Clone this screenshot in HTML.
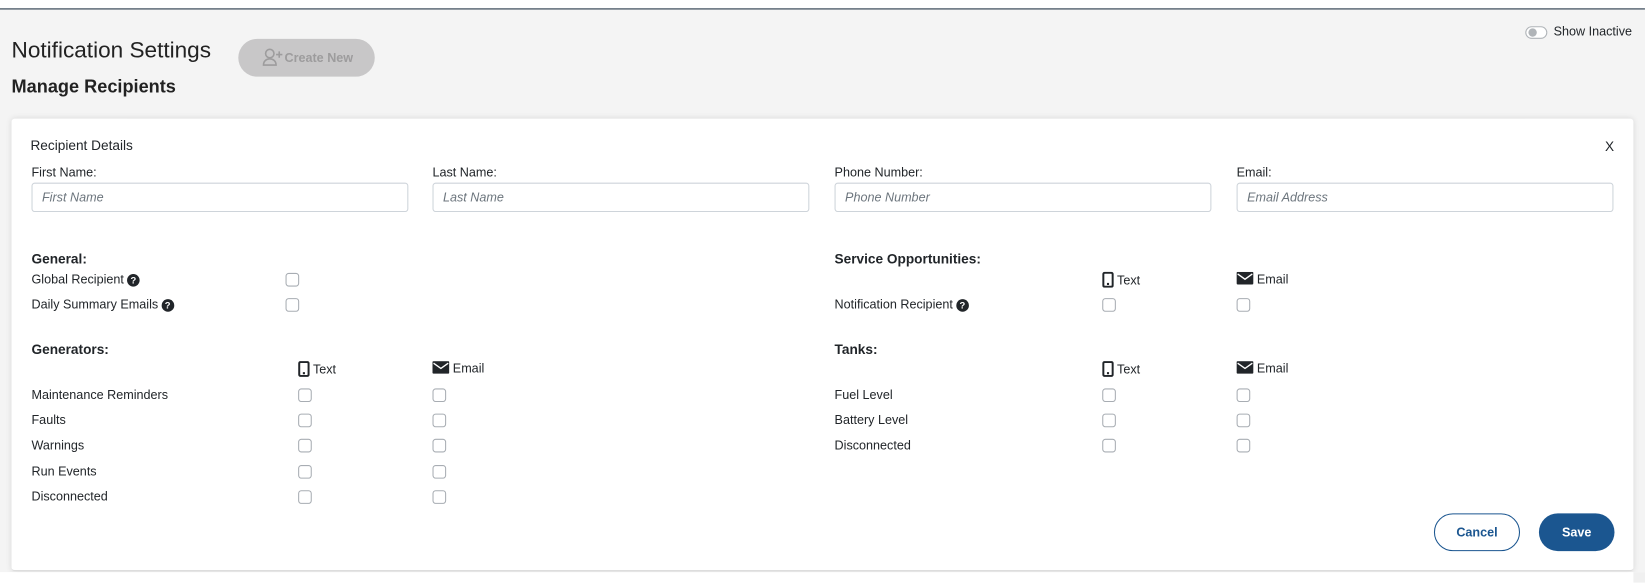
<!DOCTYPE html>
<html><head><style>
*{margin:0;padding:0;box-sizing:border-box}
body{width:1646px;height:576px;background:#fff;font-family:"Liberation Sans",sans-serif;color:#212529;position:relative;overflow:hidden;font-size:12px}
.wrap{position:absolute;left:0;top:0;width:1568px;height:549px;transform:scale(1.04974);transform-origin:0 0}
.a{position:absolute;white-space:nowrap}
.bg{position:absolute;left:0;top:8px;width:1567px;height:541px;background:#f4f4f4;border-top:1px solid #1c2e40}
.card{position:absolute;left:11px;top:113px;width:1545px;height:431px;background:#fff;border-radius:3px;box-shadow:0 0 6px rgba(0,0,0,.12);border-bottom:1px solid #ddd}
.inp{position:absolute;top:174px;height:28px;width:359px;border:1px solid #ced4da;border-radius:3px;font-style:italic;color:#6c757d;font-size:12px;padding:6px 9px}
.cb{position:absolute;width:13px;height:13px;border:1px solid #a8adb3;border-radius:3px;background:#fff}
.h{font-weight:bold;font-size:13px}
.q{display:inline-block;width:12px;height:12px;border-radius:50%;background:#212529;color:#fff;font-size:9px;font-weight:bold;text-align:center;line-height:12px;vertical-align:0;margin-left:3px}
.lab{font-size:12px;line-height:14px}
</style></head><body><div class="wrap">
<div class="bg"></div>
<div class="a" style="left:11px;top:36px;font-size:21.5px;color:#222">Notification Settings</div>
<div class="a" style="left:227px;top:37px;width:130px;height:36px;border-radius:18px;background:#c8c7c8;color:#9d9c9d;font-weight:bold;font-size:12px;line-height:36px;text-align:left;padding-left:22px">
<svg width="22" height="18" viewBox="0 0 22 18" style="vertical-align:-4px"><circle cx="8" cy="6" r="4" fill="none" stroke="#9d9c9d" stroke-width="1.5"/><path d="M2 17c0-4 3-6 6-6s6 2 6 6z" fill="none" stroke="#9d9c9d" stroke-width="1.5"/><path d="M14 7h6M17 4v6" stroke="#9d9c9d" stroke-width="1.5"/></svg>Create New</div>
<div class="a" style="left:11px;top:72px;font-size:17.3px;font-weight:bold;color:#222">Manage Recipients</div>
<div class="a" style="left:1453px;top:25px;width:21px;height:12px;border:1px solid #b0b4b8;border-radius:6px;background:#fff"><div style="position:absolute;left:2px;top:1px;width:8px;height:8px;border-radius:50%;background:#b0b4b8"></div></div>
<div class="a" style="left:1480px;top:23px;font-size:12px">Show Inactive</div>
<div class="card"></div>
<div class="a" style="left:29px;top:131px;font-size:13px">Recipient Details</div>
<div class="a" style="left:1529px;top:132px;font-size:13px">X</div>
<div class="a lab" style="left:30px;top:157px">First Name:</div>
<div class="a lab" style="left:412px;top:157px">Last Name:</div>
<div class="a lab" style="left:795px;top:157px">Phone Number:</div>
<div class="a lab" style="left:1178px;top:157px">Email:</div>
<div class="inp" style="left:30px">First Name</div>
<div class="inp" style="left:412px">Last Name</div>
<div class="inp" style="left:795px">Phone Number</div>
<div class="inp" style="left:1178px">Email Address</div>

<div class="a h" style="left:30px;top:239px">General:</div>
<div class="a lab" style="left:30px;top:259px">Global Recipient<span class="q">?</span></div>
<div class="cb" style="left:272px;top:260px"></div>
<div class="a lab" style="left:30px;top:283px">Daily Summary Emails<span class="q">?</span></div>
<div class="cb" style="left:272px;top:284px"></div>

<div class="a h" style="left:30px;top:325px">Generators:</div>
<div class="a lab" style="left:284px;top:344px"><svg width="11" height="15" viewBox="0 0 11 15" style="vertical-align:-3px"><rect x="1" y="0.8" width="9" height="13.4" rx="1.5" fill="none" stroke="#212529" stroke-width="2"/><rect x="4.5" y="10.5" width="2" height="2" fill="#212529"/></svg> Text</div>
<div class="a lab" style="left:412px;top:344px"><svg width="16" height="12" viewBox="0 0 16 12" style="vertical-align:-1px"><rect x="0" y="0" width="16" height="12" rx="1" fill="#212529"/><path d="M1 2l7 5 7-5" fill="none" stroke="#fff" stroke-width="1.3"/></svg> Email</div>
<div class="a lab" style="left:30px;top:369px">Maintenance Reminders</div>
<div class="a lab" style="left:30px;top:393px">Faults</div>
<div class="a lab" style="left:30px;top:417px">Warnings</div>
<div class="a lab" style="left:30px;top:442px">Run Events</div>
<div class="a lab" style="left:30px;top:466px">Disconnected</div>
<div class="cb" style="left:284px;top:370px"></div><div class="cb" style="left:412px;top:370px"></div>
<div class="cb" style="left:284px;top:394px"></div><div class="cb" style="left:412px;top:394px"></div>
<div class="cb" style="left:284px;top:418px"></div><div class="cb" style="left:412px;top:418px"></div>
<div class="cb" style="left:284px;top:443px"></div><div class="cb" style="left:412px;top:443px"></div>
<div class="cb" style="left:284px;top:467px"></div><div class="cb" style="left:412px;top:467px"></div>

<div class="a h" style="left:795px;top:239px">Service Opportunities:</div>
<div class="a lab" style="left:1050px;top:259px"><svg width="11" height="15" viewBox="0 0 11 15" style="vertical-align:-3px"><rect x="1" y="0.8" width="9" height="13.4" rx="1.5" fill="none" stroke="#212529" stroke-width="2"/><rect x="4.5" y="10.5" width="2" height="2" fill="#212529"/></svg> Text</div>
<div class="a lab" style="left:1178px;top:259px"><svg width="16" height="12" viewBox="0 0 16 12" style="vertical-align:-1px"><rect x="0" y="0" width="16" height="12" rx="1" fill="#212529"/><path d="M1 2l7 5 7-5" fill="none" stroke="#fff" stroke-width="1.3"/></svg> Email</div>
<div class="a lab" style="left:795px;top:283px">Notification Recipient<span class="q">?</span></div>
<div class="cb" style="left:1050px;top:284px"></div><div class="cb" style="left:1178px;top:284px"></div>

<div class="a h" style="left:795px;top:325px">Tanks:</div>
<div class="a lab" style="left:1050px;top:344px"><svg width="11" height="15" viewBox="0 0 11 15" style="vertical-align:-3px"><rect x="1" y="0.8" width="9" height="13.4" rx="1.5" fill="none" stroke="#212529" stroke-width="2"/><rect x="4.5" y="10.5" width="2" height="2" fill="#212529"/></svg> Text</div>
<div class="a lab" style="left:1178px;top:344px"><svg width="16" height="12" viewBox="0 0 16 12" style="vertical-align:-1px"><rect x="0" y="0" width="16" height="12" rx="1" fill="#212529"/><path d="M1 2l7 5 7-5" fill="none" stroke="#fff" stroke-width="1.3"/></svg> Email</div>
<div class="a lab" style="left:795px;top:369px">Fuel Level</div>
<div class="a lab" style="left:795px;top:393px">Battery Level</div>
<div class="a lab" style="left:795px;top:417px">Disconnected</div>
<div class="cb" style="left:1050px;top:370px"></div><div class="cb" style="left:1178px;top:370px"></div>
<div class="cb" style="left:1050px;top:394px"></div><div class="cb" style="left:1178px;top:394px"></div>
<div class="cb" style="left:1050px;top:418px"></div><div class="cb" style="left:1178px;top:418px"></div>

<div class="a" style="left:1366px;top:489px;width:82px;height:36px;border:1px solid #1b5690;border-radius:18px;color:#1b5690;font-weight:bold;text-align:center;line-height:34px">Cancel</div>
<div class="a" style="left:1466px;top:489px;width:72px;height:36px;background:#1b5690;border-radius:18px;color:#fff;font-weight:bold;text-align:center;line-height:36px">Save</div>
<div class="a" style="left:0;top:545px;width:1568px;height:10px;background:#fff"></div>
<div class="a" style="left:1556px;top:545px;width:11px;height:10px;background:#f0f0f0"></div>
</div></body></html>
